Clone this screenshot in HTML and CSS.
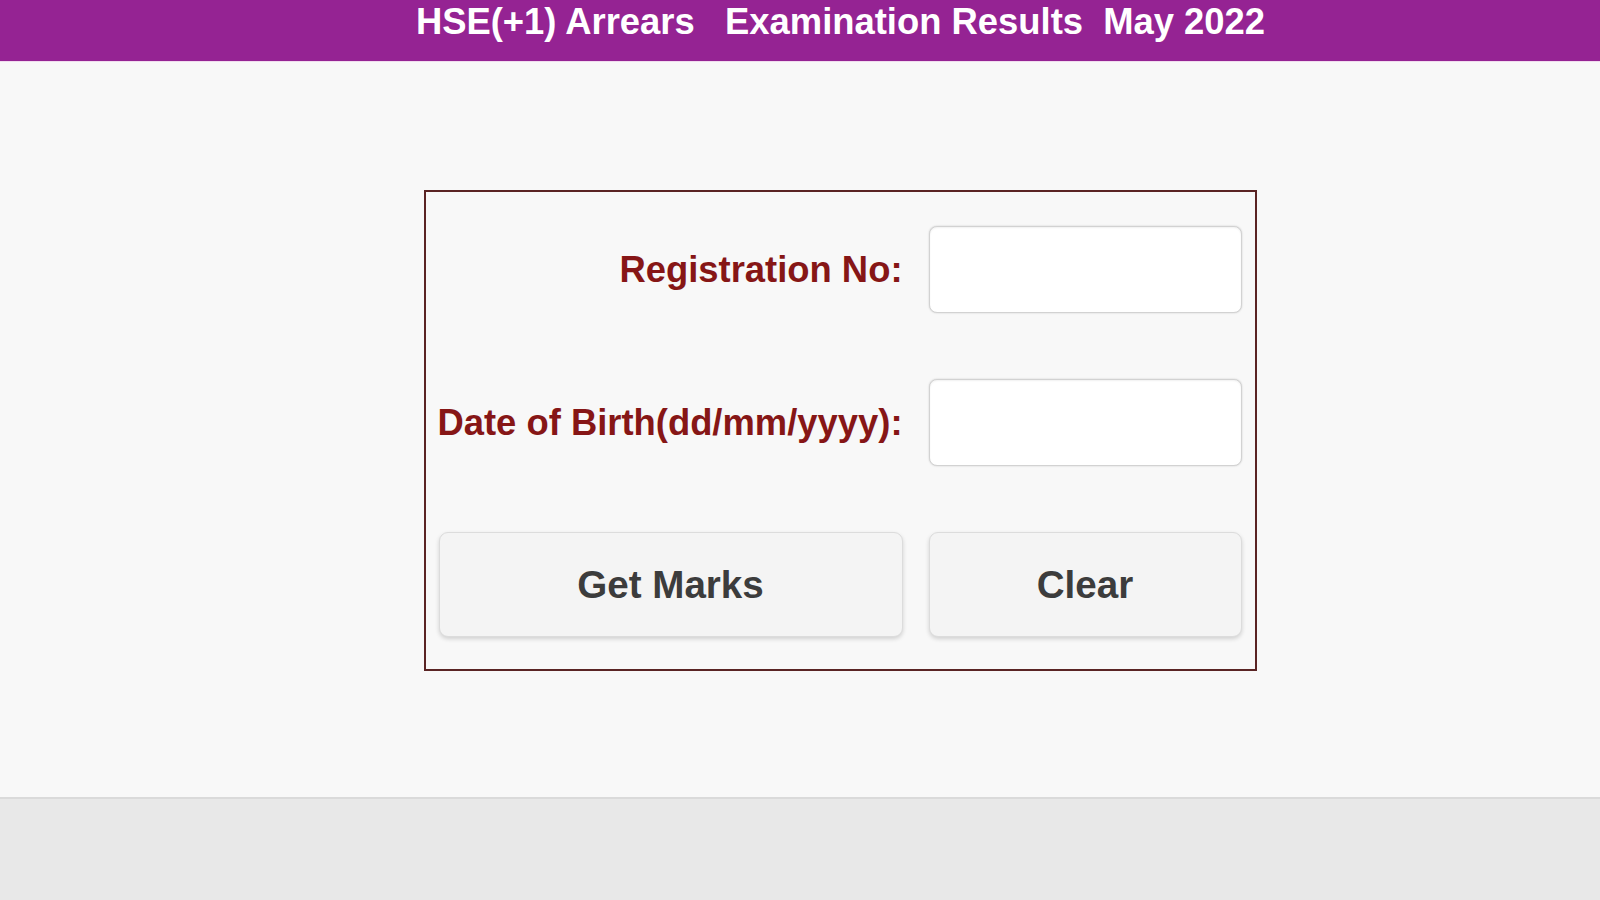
FILE: index.html
```html
<!DOCTYPE html>
<html lang="en">
<head>
<meta charset="utf-8">
<title>HSE(+1) Arrears Examination Results May 2022</title>
<link rel="stylesheet" href="styles.css">
</head>
<body>
<header class="topbar">
  <h1 class="title">HSE(+1) Arrears&nbsp;&nbsp; Examination Results&nbsp; May 2022</h1>
</header>
<main class="content">
  <form class="result-form" onsubmit="return false;">
    <label class="field-label" for="regno">Registration No:</label>
    <input class="field-input" id="regno" type="text">
    <label class="field-label" for="dob">Date of Birth(dd/mm/yyyy):</label>
    <input class="field-input" id="dob" type="text">
    <button class="btn" type="submit">Get Marks</button>
    <button class="btn" type="reset">Clear</button>
  </form>
</main>
<footer class="footer"></footer>
</body>
</html>
```
FILE: styles.css
```css
html, body {
  margin: 0;
  padding: 0;
}
body {
  background: #f8f8f8;
  font-family: "Liberation Sans", Arial, sans-serif;
  overflow: hidden;
}
.topbar {
  height: 61px;
  box-sizing: border-box;
  background: #952393;
  padding: 3px 0 0 81px;
  box-shadow: 0 1px 0 #f1dcef;
}
.title {
  margin: 0;
  color: #ffffff;
  font-size: 36.4px;
  line-height: 37px;
  font-weight: bold;
  text-align: center;
  white-space: nowrap;
}
.content {
  height: 736px;
  box-sizing: border-box;
  padding: 129px 0 0 80px;
}
.result-form {
  width: 833px;
  box-sizing: border-box;
  margin: 0 auto;
  border: 2px solid #5a2424;
  padding: 34px 13px 32px 13px;
  display: grid;
  grid-template-columns: 464px 313px;
  column-gap: 26px;
  row-gap: 66px;
}
.field-label {
  align-self: center;
  justify-self: end;
  color: #861616;
  font-size: 36.4px;
  font-weight: bold;
  white-space: nowrap;
}
.field-input {
  height: 87px;
  box-sizing: border-box;
  border: 1px solid #d2d2d2;
  border-radius: 8px;
  background: #ffffff;
  box-shadow: 0 0 2px rgba(0,0,0,0.18), inset 0 1px 2px rgba(0,0,0,0.06);
  font-size: 30px;
  padding: 0 12px;
  outline: none;
}
.btn {
  height: 105px;
  box-sizing: border-box;
  border: 1px solid #dcdcdc;
  border-radius: 9px;
  background: #f4f4f4;
  box-shadow: 0 2px 4px rgba(0,0,0,0.16);
  color: #3c3c3c;
  font-family: "Liberation Sans", Arial, sans-serif;
  font-size: 38.6px;
  font-weight: bold;
  cursor: pointer;
}
.footer {
  height: 120px;
  background: #e8e8e8;
  border-top: 2px solid #dadada;
}
```
